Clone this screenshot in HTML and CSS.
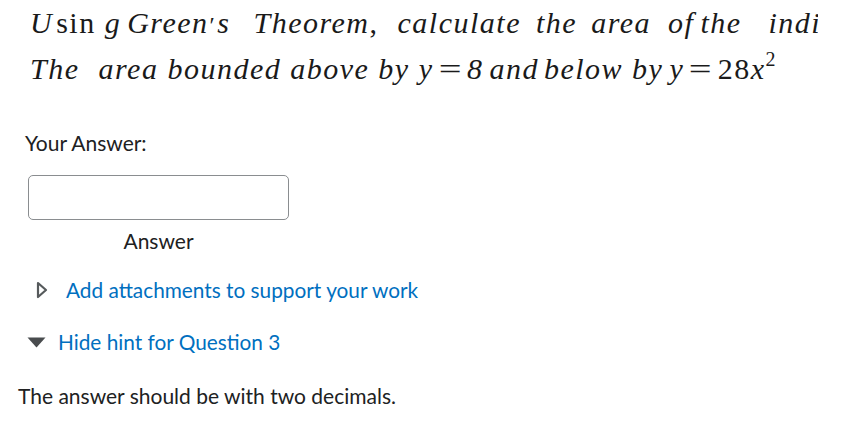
FILE: index.html
```html
<!DOCTYPE html>
<html>
<head>
<meta charset="utf-8">
<link rel="stylesheet" href="styles.css">
</head>
<body>
<div class="page">
  <div class="question">
    <div class="math-line"><span class="mi u">U</span><span class="mo w1">sin</span><span class="mi g">g</span><span class="mi">Green</span><span class="mo prime">′</span><span class="mi s">s</span><span class="mi">Theorem</span><span class="mo w2">,</span><span class="mi calc">calculate</span><span class="mi the1">the</span><span class="mi area1">area</span><span class="mi of">of</span><span class="mi the2">the</span><span class="mi w1">indicated</span><span class="mi">region</span></div>
    <div class="math-line"><span class="mi w2">The</span><span class="mi w1">area</span><span class="mi w1">bounded</span><span class="mi w1">above</span><span class="mi w0">by</span><span class="mi">y</span><span class="rel">=</span><span class="mi eight">8</span><span class="mi and">and</span><span class="mi w1">below</span><span class="mi by2">by</span><span class="mi">y</span><span class="rel">=</span><span class="mo">28</span><span class="mi">x</span><sup class="sup">2</sup></div>
  </div>

  <div class="answer">
    <div class="answer-label">Your Answer:</div>
    <div class="field">
      <input class="field-input" type="text" aria-label="Answer">
      <div class="field-caption">Answer</div>
    </div>
  </div>

  <div class="toggle toggle-attach">
    <svg class="icon-right" width="12" height="18" viewBox="0 0 12 18"><path d="M2 2 L10 9 L2 16 Z" fill="none" stroke="#565a5c" stroke-width="2.2" stroke-linejoin="round"/></svg>
    <a class="link" href="#">Add attachments to support your work</a>
  </div>

  <div class="toggle toggle-hint">
    <svg class="icon-down" width="19" height="11" viewBox="0 0 19 11"><path d="M0.5 0.5 L18.5 0.5 L9.5 10.5 Z" fill="#494c4e"/></svg>
    <a class="link" href="#">Hide hint for Question 3</a>
  </div>

  <p class="hint-text">The answer should be with two decimals.</p>
</div>
</body>
</html>
```

FILE: styles.css
```css
html, body {
  margin: 0;
  padding: 0;
  background: #ffffff;
}

.page {
  width: 864px;
  height: 441px;
  overflow: hidden;
  font-family: Lato, "Noto Sans", sans-serif;
  color: #202122;
}

.question {
  width: 818px;
  overflow: hidden;
  padding-left: 30px;
  padding-top: 1px;
  box-sizing: border-box;
}

.math-line {
  font-family: "Liberation Serif", "DejaVu Serif", serif;
  font-size: 30px;
  line-height: 43px;
  letter-spacing: 1.5px;
  white-space: nowrap;
  color: #1a1a1a;
}

.mi {
  font-style: italic;
}

.mo {
  font-style: normal;
}

.u { margin-right: 3px; }
.g { margin-right: 6px; }
.s { margin-right: 23px; }
.calc { margin-right: 15px; }
.the1 { margin-right: 14px; }
.area1 { margin-right: 17px; }
.of { margin-right: 6px; }
.the2 { margin-right: 27px; }
.eight { margin-right: 6px; }
.and { margin-right: 5px; }
.by2 { margin-right: 6px; }
.w0 { margin-right: 9px; }
.w1 { margin-right: 9px; }
.w2 { margin-right: 19px; }

.prime {
  font-size: 24px;
  margin: 0 1px;
}

.rel {
  display: inline-block;
  margin: 0 7px 0 8px;
  transform: scaleX(1.35);
}

.sup {
  font-size: 20px;
  line-height: 0;
  vertical-align: 13px;
}

.answer {
  padding-left: 25px;
  padding-top: 41px;
}

.answer-label {
  font-size: 21px;
  line-height: 24px;
}

.field {
  display: flex;
  flex-direction: column;
  align-items: center;
  width: 261px;
  margin-left: 3px;
  margin-top: 20px;
}

.field-input {
  width: 261px;
  height: 45px;
  box-sizing: border-box;
  border: 1px solid #8a8d90;
  border-radius: 5px;
  margin: 0;
  padding: 0 10px;
  background: #fff;
}

.field-caption {
  font-size: 21px;
  line-height: 24px;
  margin-top: 9px;
}

.toggle {
  display: flex;
  align-items: center;
}

.toggle-attach {
  padding-left: 36px;
  margin-top: 24px;
  gap: 18px;
  height: 26px;
}

.toggle-hint {
  padding-left: 27px;
  margin-top: 26px;
  gap: 12px;
  height: 26px;
}

.link {
  color: #006fbf;
  text-decoration: none;
  font-size: 20.8px;
  line-height: 24px;
}

.hint-text {
  margin: 29px 0 0 18px;
  font-size: 21px;
  line-height: 24px;
}
```
